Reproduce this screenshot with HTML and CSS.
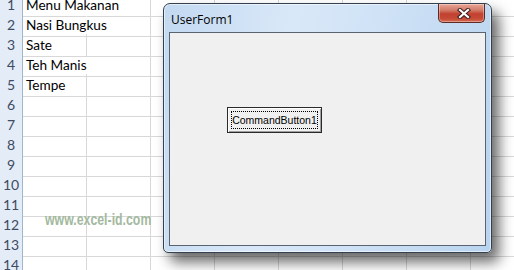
FILE: index.html
```html
<!DOCTYPE html>
<html>
<head>
<meta charset="utf-8">
<link rel="stylesheet" href="styles.css">
</head>
<body>
<div class="sheet">
  <div class="row"><div class="hdr">1</div><div class="cell ov">Menu Makanan</div><div class="cell"></div><div class="cell"></div><div class="cell"></div><div class="cell"></div><div class="cell"></div><div class="cell"></div><div class="cell"></div></div>
  <div class="row"><div class="hdr">2</div><div class="cell ov">Nasi Bungkus</div><div class="cell"></div><div class="cell"></div><div class="cell"></div><div class="cell"></div><div class="cell"></div><div class="cell"></div><div class="cell"></div></div>
  <div class="row"><div class="hdr">3</div><div class="cell">Sate</div><div class="cell"></div><div class="cell"></div><div class="cell"></div><div class="cell"></div><div class="cell"></div><div class="cell"></div><div class="cell"></div></div>
  <div class="row"><div class="hdr">4</div><div class="cell ov">Teh Manis</div><div class="cell"></div><div class="cell"></div><div class="cell"></div><div class="cell"></div><div class="cell"></div><div class="cell"></div><div class="cell"></div></div>
  <div class="row"><div class="hdr">5</div><div class="cell">Tempe</div><div class="cell"></div><div class="cell"></div><div class="cell"></div><div class="cell"></div><div class="cell"></div><div class="cell"></div><div class="cell"></div></div>
  <div class="row"><div class="hdr">6</div><div class="cell"></div><div class="cell"></div><div class="cell"></div><div class="cell"></div><div class="cell"></div><div class="cell"></div><div class="cell"></div><div class="cell"></div></div>
  <div class="row"><div class="hdr">7</div><div class="cell"></div><div class="cell"></div><div class="cell"></div><div class="cell"></div><div class="cell"></div><div class="cell"></div><div class="cell"></div><div class="cell"></div></div>
  <div class="row"><div class="hdr">8</div><div class="cell"></div><div class="cell"></div><div class="cell"></div><div class="cell"></div><div class="cell"></div><div class="cell"></div><div class="cell"></div><div class="cell"></div></div>
  <div class="row"><div class="hdr">9</div><div class="cell"></div><div class="cell"></div><div class="cell"></div><div class="cell"></div><div class="cell"></div><div class="cell"></div><div class="cell"></div><div class="cell"></div></div>
  <div class="row"><div class="hdr">10</div><div class="cell"></div><div class="cell"></div><div class="cell"></div><div class="cell"></div><div class="cell"></div><div class="cell"></div><div class="cell"></div><div class="cell"></div></div>
  <div class="row"><div class="hdr">11</div><div class="cell"></div><div class="cell"></div><div class="cell"></div><div class="cell"></div><div class="cell"></div><div class="cell"></div><div class="cell"></div><div class="cell"></div></div>
  <div class="row"><div class="hdr">12</div><div class="cell"></div><div class="cell"></div><div class="cell"></div><div class="cell"></div><div class="cell"></div><div class="cell"></div><div class="cell"></div><div class="cell"></div></div>
  <div class="row"><div class="hdr">13</div><div class="cell"></div><div class="cell"></div><div class="cell"></div><div class="cell"></div><div class="cell"></div><div class="cell"></div><div class="cell"></div><div class="cell"></div></div>
  <div class="row"><div class="hdr">14</div><div class="cell"></div><div class="cell"></div><div class="cell"></div><div class="cell"></div><div class="cell"></div><div class="cell"></div><div class="cell"></div><div class="cell"></div></div>
</div>

<div class="watermark">www.excel-id.com</div>

<div class="window">
  <div class="titlebar">
    <span class="title">UserForm1</span>
    <div class="close">
      <svg width="14" height="11" viewBox="0 0 14 11">
        <path d="M3 2 L11 9 M11 2 L3 9" stroke="#3a2020" stroke-width="4.2" stroke-linecap="square" fill="none"/>
        <path d="M3 2 L11 9 M11 2 L3 9" stroke="#ffffff" stroke-width="2.2" stroke-linecap="square" fill="none"/>
      </svg>
    </div>
  </div>
  <div class="client">
    <div class="cmdbtn"><span class="focus">CommandButton1</span></div>
  </div>
</div>
</body>
</html>
```
FILE: styles.css
```css
html, body {
  margin: 0;
  padding: 0;
  width: 514px;
  height: 270px;
  overflow: hidden;
  background: #ffffff;
}

.sheet {
  margin-top: -6px;
  font-family: Lato, "Liberation Sans", sans-serif;
  font-size: 13.6px;
  color: #000;
}

.row {
  display: grid;
  grid-template-columns: 23px repeat(8, 64px);
  height: 20px;
}

.hdr {
  box-sizing: border-box;
  background: #e4ecf7;
  border-right: 1px solid #9eb6ce;
  border-bottom: 1px solid #c3d1e2;
  color: #3d4b63;
  font-size: 14px;
  text-align: center;
  line-height: 22px;
}

.cell {
  box-sizing: border-box;
  border-right: 1px solid #d8d8d8;
  border-bottom: 1px solid #d8d8d8;
  padding-left: 3px;
  line-height: 22px;
  white-space: nowrap;
}

.cell.ov {
  border-right-color: transparent;
  overflow: visible;
}

.watermark {
  position: absolute;
  left: 45px;
  top: 211px;
  font-family: "Liberation Sans", Arial, sans-serif;
  font-weight: bold;
  font-size: 16px;
  color: #a3b9a0;
  transform: scaleX(0.77);
  transform-origin: left top;
}

.window {
  position: absolute;
  left: 163px;
  top: 3px;
  width: 329px;
  height: 250px;
  box-sizing: border-box;
  border: 1px solid #34404e;
  border-radius: 7px 7px 5px 5px;
  padding: 0 5px 6px 5px;
  background: linear-gradient(100deg, #c2d9f1 0%, #d9e8f8 35%, #cfe2f6 60%, #b9d4ef 100%);
  box-shadow: inset 0 0 0 1px rgba(255,255,255,0.55), 7px 9px 14px rgba(0,0,0,0.6);
  display: flex;
  flex-direction: column;
}

.titlebar {
  height: 28px;
  flex: none;
  display: flex;
  align-items: center;
}

.title {
  font-family: "Open Sans", "Noto Sans", sans-serif;
  font-size: 12px;
  color: #000;
  padding-left: 2px;
  padding-top: 3px;
}

.close {
  position: absolute;
  top: 0;
  right: 6px;
  width: 47px;
  height: 19px;
  box-sizing: border-box;
  border: 1px solid #5c2b26;
  border-top: none;
  border-radius: 0 0 5px 5px;
  background: linear-gradient(#eaa596 0%, #d27a68 35%, #c2402f 55%, #c44a36 80%, #d86a4e 100%);
  box-shadow: inset 0 0 0 1px rgba(255,255,255,0.35);
  display: flex;
  align-items: center;
  justify-content: center;
  padding-left: 4px;
}

.client {
  flex: 1;
  box-sizing: border-box;
  border: 1px solid #5a6470;
  background: #f0f0f0;
  position: relative;
}

.cmdbtn {
  position: absolute;
  left: 57px;
  top: 74px;
  width: 95px;
  height: 26px;
  box-sizing: border-box;
  border: 1px solid #2a2a2a;
  background: #f0f0f0;
  box-shadow: inset 1px 1px 0 #ffffff, inset -1px -1px 0 #a0a0a0;
  padding: 3px;
  display: flex;
}

.focus {
  flex: 1;
  border: 1px dotted #000;
  font-family: "Liberation Sans", Arial, sans-serif;
  font-size: 10.5px;
  color: #000;
  display: flex;
  align-items: center;
  justify-content: center;
  white-space: nowrap;
}
```
